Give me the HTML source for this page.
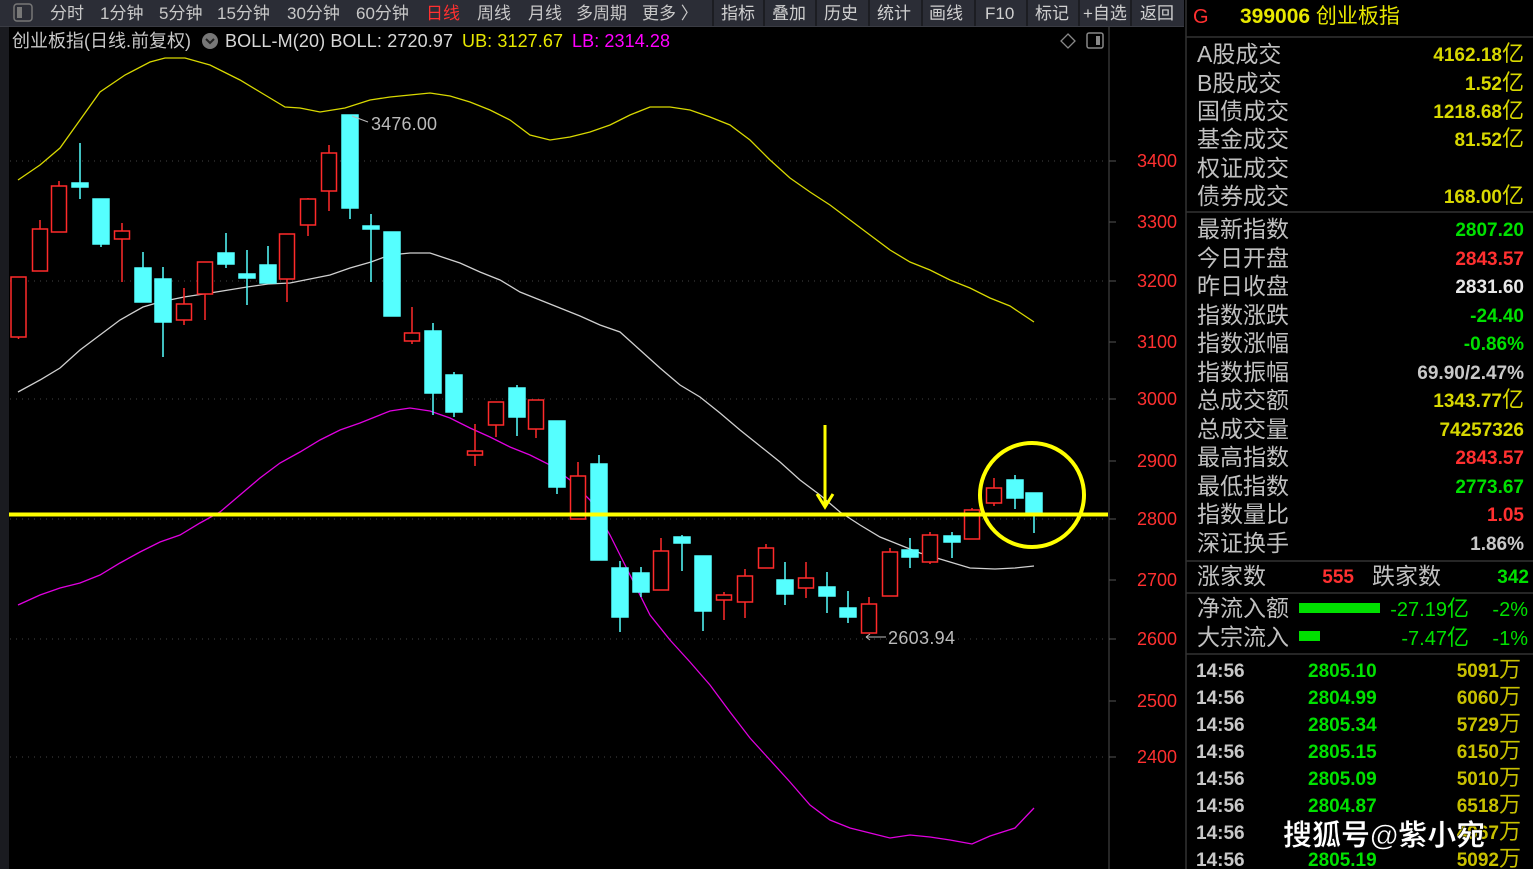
<!DOCTYPE html>
<html><head><meta charset="utf-8"><style>
html,body{margin:0;padding:0;background:#000;width:1533px;height:869px;overflow:hidden}
svg{display:block}
text{font-family:"Liberation Sans","Noto Sans CJK SC",sans-serif}
</style></head><body>
<svg width="1533" height="869" viewBox="0 0 1533 869" xmlns="http://www.w3.org/2000/svg">
<rect width="1533" height="869" fill="#000"/>
<rect x="0" y="0" width="1184" height="26" fill="#2b2d36"/>
<rect x="0" y="26" width="1184" height="1" fill="#3a3c44"/>
<rect x="14" y="4" width="18" height="17" rx="3" fill="none" stroke="#777" stroke-width="1.5"/>
<rect x="17" y="7" width="5" height="11" fill="#777"/>
<g fill="#c8c8c8" font-size="17">
<text x="50" y="19">分时</text><text x="100" y="19">1分钟</text><text x="159" y="19">5分钟</text>
<text x="217" y="19">15分钟</text><text x="287" y="19">30分钟</text><text x="356" y="19">60分钟</text>
<text x="426" y="19" fill="#ff3030">日线</text><text x="477" y="19">周线</text><text x="528" y="19">月线</text>
<text x="576" y="19">多周期</text><text x="642" y="19">更多 〉</text>
</g>
<g stroke="#1c1d22" stroke-width="2">
<line x1="713" y1="0" x2="713" y2="26"/><line x1="764" y1="0" x2="764" y2="26"/><line x1="816" y1="0" x2="816" y2="26"/>
<line x1="869" y1="0" x2="869" y2="26"/><line x1="922" y1="0" x2="922" y2="26"/><line x1="975" y1="0" x2="975" y2="26"/>
<line x1="1027" y1="0" x2="1027" y2="26"/><line x1="1079" y1="0" x2="1079" y2="26"/><line x1="1131" y1="0" x2="1131" y2="26"/>
</g>
<g fill="#d0d0d0" font-size="17">
<text x="721" y="19">指标</text><text x="772" y="19">叠加</text><text x="824" y="19">历史</text><text x="877" y="19">统计</text>
<text x="929" y="19">画线</text><text x="985" y="19">F10</text><text x="1035" y="19">标记</text><text x="1083" y="19">+自选</text><text x="1140" y="19">返回</text>
</g>
<rect x="0" y="27" width="9" height="842" fill="#1a1b20"/>
<g font-size="18">
<text x="12" y="47" fill="#c8c8c8">创业板指(日线.前复权)</text>
<circle cx="210" cy="41" r="8" fill="#777"/><path d="M206 39l4 4 4-4" stroke="#222" stroke-width="2" fill="none"/>
<text x="225" y="47" fill="#d8d8d8" textLength="228">BOLL-M(20)  BOLL: 2720.97</text>
<text x="462" y="47" fill="#e8e800" textLength="101">UB: 3127.67</text>
<text x="572" y="47" fill="#ff00ff" textLength="98">LB: 2314.28</text>
</g>
<path d="M1068 34l7 7-7 7-7-7z" fill="none" stroke="#888" stroke-width="1.3"/>
<rect x="1087" y="33" width="16" height="15" rx="2" fill="none" stroke="#888" stroke-width="1.5"/><rect x="1096" y="36" width="4" height="9" fill="#888"/>
<line x1="1109" y1="27" x2="1109" y2="869" stroke="#333" stroke-width="1.5"/>
<line x1="1186" y1="0" x2="1186" y2="869" stroke="#333" stroke-width="1.5"/>
<g stroke="#444" stroke-dasharray="1 5">
<line x1="10" y1="161" x2="1108" y2="161"/><line x1="10" y1="281" x2="1108" y2="281"/><line x1="10" y1="399" x2="1108" y2="399"/>
<line x1="10" y1="519" x2="1108" y2="519"/><line x1="10" y1="639" x2="1108" y2="639"/><line x1="10" y1="757" x2="1108" y2="757"/>
</g>
<g stroke="#555"><line x1="1109" y1="161" x2="1116" y2="161"/><line x1="1109" y1="222" x2="1116" y2="222"/><line x1="1109" y1="281" x2="1116" y2="281"/><line x1="1109" y1="342" x2="1116" y2="342"/><line x1="1109" y1="399" x2="1116" y2="399"/><line x1="1109" y1="461" x2="1116" y2="461"/><line x1="1109" y1="519" x2="1116" y2="519"/><line x1="1109" y1="580" x2="1116" y2="580"/><line x1="1109" y1="639" x2="1116" y2="639"/><line x1="1109" y1="701" x2="1116" y2="701"/><line x1="1109" y1="757" x2="1116" y2="757"/></g>
<g fill="#ff3030" font-size="18" text-anchor="end">
<text x="1177" y="167">3400</text><text x="1177" y="228">3300</text><text x="1177" y="287">3200</text><text x="1177" y="348">3100</text>
<text x="1177" y="405">3000</text><text x="1177" y="467">2900</text><text x="1177" y="525">2800</text><text x="1177" y="586">2700</text>
<text x="1177" y="645">2600</text><text x="1177" y="707">2500</text><text x="1177" y="763">2400</text>
</g>
<polyline fill="none" stroke="#d8d800" stroke-width="1.3" points="18,180 40,165 60,148 80,120 100,92 125,75 150,62 165,58 185,58 210,65 240,80 265,95 285,107 300,108 320,112 345,108 370,100 390,97 410,95 430,93 450,96 470,102 490,110 510,120 530,135 550,140 570,137 590,132 610,125 630,115 650,107 670,107 690,110 710,117 730,125 750,140 770,160 790,178 810,192 830,205 850,220 870,235 890,250 910,262 930,270 950,280 970,288 990,298 1010,306 1034,322"/>
<polyline fill="none" stroke="#d0d0d0" stroke-width="1.3" points="18,392 40,380 60,368 80,350 100,335 120,320 143,307 160,302 184,297 210,293 247,287 268,284 290,283 310,279 330,275 350,268 371,262 390,255 410,253 430,253 445,258 460,263 480,272 500,280 520,292 540,300 560,308 580,316 600,325 620,332 640,350 660,368 680,385 700,397 720,413 740,430 760,446 780,462 800,480 820,495 840,512 860,525 880,537 900,545 920,553 950,562 970,568 995,569 1015,568 1034,566"/>
<polyline fill="none" stroke="#e000e0" stroke-width="1.3" points="18,605 40,595 60,588 80,583 100,575 120,563 140,552 160,542 180,535 200,523 220,512 240,495 260,478 280,463 300,452 320,440 340,430 360,423 380,415 390,411 410,408 430,411 450,418 470,428 490,437 510,447 530,455 550,465 570,480 590,500 610,535 630,575 650,615 670,640 690,662 710,685 730,712 750,738 770,760 790,782 810,805 830,820 850,828 870,833 890,838 910,835 930,837 950,840 972,844 990,836 1015,828 1034,808"/>
<g stroke="#ff2a2a" stroke-width="1.5" fill="#000">
<line x1="18.5" y1="277" x2="18.5" y2="339"/><rect x="11" y="277" width="15" height="60"/>
<line x1="40" y1="220" x2="40" y2="271"/><rect x="32.5" y="229" width="15" height="42"/>
<line x1="59" y1="181" x2="59" y2="232"/><rect x="51.5" y="186" width="15" height="46"/>
<line x1="122" y1="223" x2="122" y2="282"/><rect x="114.5" y="231" width="15" height="8"/>
<line x1="184" y1="288" x2="184" y2="325"/><rect x="176.5" y="304" width="15" height="16"/>
<line x1="205" y1="262" x2="205" y2="320"/><rect x="197.5" y="262" width="15" height="32"/>
<line x1="287" y1="234" x2="287" y2="302"/><rect x="279.5" y="234" width="15" height="45"/>
<line x1="308" y1="198" x2="308" y2="236"/><rect x="300.5" y="199" width="15" height="26"/>
<line x1="329" y1="145" x2="329" y2="211"/><rect x="321.5" y="153" width="15" height="38"/>
<line x1="412" y1="307" x2="412" y2="344"/><rect x="404.5" y="333" width="15" height="8"/>
<line x1="475" y1="424" x2="475" y2="466"/><rect x="467.5" y="451" width="15" height="4"/>
<line x1="496" y1="402" x2="496" y2="437"/><rect x="488.5" y="402" width="15" height="23"/>
<line x1="536" y1="400" x2="536" y2="438"/><rect x="528.5" y="400" width="15" height="29"/>
<line x1="578" y1="462" x2="578" y2="519"/><rect x="570.5" y="476" width="15" height="43"/>
<line x1="661" y1="538" x2="661" y2="590"/><rect x="653.5" y="551" width="15" height="39"/>
<line x1="724" y1="592" x2="724" y2="620"/><rect x="716.5" y="595" width="15" height="5"/>
<line x1="745" y1="569" x2="745" y2="618"/><rect x="737.5" y="576" width="15" height="26"/>
<line x1="766" y1="544" x2="766" y2="568"/><rect x="758.5" y="548" width="15" height="20"/>
<line x1="806" y1="562" x2="806" y2="598"/><rect x="798.5" y="578" width="15" height="10"/>
<line x1="869" y1="597" x2="869" y2="633"/><rect x="861.5" y="604" width="15" height="29"/>
<line x1="890" y1="548" x2="890" y2="596"/><rect x="882.5" y="552" width="15" height="44"/>
<line x1="930" y1="532" x2="930" y2="564"/><rect x="922.5" y="535" width="15" height="27"/>
<line x1="972" y1="508" x2="972" y2="539"/><rect x="964.5" y="510" width="15" height="29"/>
<line x1="994" y1="478" x2="994" y2="506"/><rect x="986.5" y="488" width="15" height="15"/>
</g>
<g stroke="#55ffff" stroke-width="1.5" fill="#55ffff">
<line x1="80" y1="143" x2="80" y2="199"/><rect x="72" y="183" width="16" height="4"/>
<line x1="101" y1="199" x2="101" y2="247"/><rect x="93" y="199" width="16" height="45"/>
<line x1="143" y1="252" x2="143" y2="302"/><rect x="135" y="268" width="16" height="34"/>
<line x1="163" y1="267" x2="163" y2="357"/><rect x="155" y="279" width="16" height="43"/>
<line x1="226" y1="233" x2="226" y2="268"/><rect x="218" y="253" width="16" height="11"/>
<line x1="247" y1="250" x2="247" y2="305"/><rect x="239" y="274" width="16" height="4"/>
<line x1="268" y1="246" x2="268" y2="283"/><rect x="260" y="265" width="16" height="18"/>
<line x1="350" y1="115" x2="350" y2="219"/><rect x="342" y="115" width="16" height="93"/>
<line x1="371" y1="214" x2="371" y2="282"/><rect x="363" y="226" width="16" height="3"/>
<rect x="384" y="232" width="16" height="84"/>
<line x1="433" y1="323" x2="433" y2="415"/><rect x="425" y="331" width="16" height="62"/>
<line x1="454" y1="372" x2="454" y2="417"/><rect x="446" y="375" width="16" height="37"/>
<line x1="517" y1="385" x2="517" y2="436"/><rect x="509" y="388" width="16" height="29"/>
<line x1="557" y1="421" x2="557" y2="494"/><rect x="549" y="421" width="16" height="66"/>
<line x1="599" y1="455" x2="599" y2="560"/><rect x="591" y="464" width="16" height="96"/>
<line x1="620" y1="561" x2="620" y2="632"/><rect x="612" y="568" width="16" height="49"/>
<line x1="641" y1="567" x2="641" y2="597"/><rect x="633" y="573" width="16" height="19"/>
<line x1="682" y1="535" x2="682" y2="571"/><rect x="674" y="537" width="16" height="6"/>
<line x1="703" y1="556" x2="703" y2="631"/><rect x="695" y="556" width="16" height="55"/>
<line x1="785" y1="562" x2="785" y2="605"/><rect x="777" y="580" width="16" height="14"/>
<line x1="827" y1="572" x2="827" y2="613"/><rect x="819" y="587" width="16" height="9"/>
<line x1="848" y1="591" x2="848" y2="623"/><rect x="840" y="608" width="16" height="9"/>
<line x1="910" y1="538" x2="910" y2="568"/><rect x="902" y="550" width="16" height="7"/>
<line x1="952" y1="532" x2="952" y2="558"/><rect x="944" y="536" width="16" height="6"/>
<line x1="1015" y1="475" x2="1015" y2="509"/><rect x="1007" y="480" width="16" height="18"/>
<line x1="1034" y1="493" x2="1034" y2="533"/><rect x="1026" y="493" width="16" height="20"/>
</g>
<g fill="#bbb" font-size="18"><text x="371" y="130" textLength="66">3476.00</text><text x="888" y="644" textLength="67">2603.94</text></g>
<path d="M352 116 l16 6" stroke="#bbb"/><path d="M866 637 h20 M866 637 l4 -3 M866 637 l4 3" stroke="#bbb" fill="none"/>
<line x1="9" y1="514.5" x2="1108" y2="514.5" stroke="#ffff00" stroke-width="4"/>
<line x1="825" y1="425" x2="825" y2="505" stroke="#ffff00" stroke-width="3"/>
<path d="M817 494 l8 13 l8 -13" stroke="#ffff00" stroke-width="3" fill="none"/>
<circle cx="1032" cy="495" r="52" fill="none" stroke="#ffff00" stroke-width="4"/>
<text x="1193" y="23" fill="#ff3030" font-size="20">G</text>
<text x="1240" y="23" fill="#e8e800" font-size="21" font-weight="bold">399006 <tspan font-weight="normal">创业板指</tspan></text>
<g stroke="#333" stroke-width="1.5">
<line x1="1186" y1="37" x2="1533" y2="37"/><line x1="1186" y1="212" x2="1533" y2="212"/><line x1="1186" y1="561" x2="1533" y2="561"/>
<line x1="1186" y1="593" x2="1533" y2="593"/><line x1="1186" y1="654" x2="1533" y2="654"/>
</g>
<g fill="#c0c0c0" font-size="23">
<text x="1197" y="62">A股成交</text><text x="1197" y="91">B股成交</text><text x="1197" y="119">国债成交</text><text x="1197" y="147">基金成交</text>
<text x="1197" y="176">权证成交</text><text x="1197" y="204">债券成交</text>
<text x="1197" y="237">最新指数</text><text x="1197" y="266">今日开盘</text><text x="1197" y="294">昨日收盘</text><text x="1197" y="323">指数涨跌</text>
<text x="1197" y="351">指数涨幅</text><text x="1197" y="380">指数振幅</text><text x="1197" y="408">总成交额</text><text x="1197" y="437">总成交量</text>
<text x="1197" y="465">最高指数</text><text x="1197" y="494">最低指数</text><text x="1197" y="522">指数量比</text><text x="1197" y="551">深证换手</text>
<text x="1197" y="584">涨家数</text><text x="1372" y="584">跌家数</text>
<text x="1197" y="616">净流入额</text><text x="1197" y="645">大宗流入</text>
</g>
<g font-size="19" font-weight="bold" text-anchor="end">
<g fill="#d8d800"><text x="1524" y="61">4162.18<tspan font-weight="normal" font-size="22">亿</tspan></text><text x="1524" y="90">1.52<tspan font-weight="normal" font-size="22">亿</tspan></text>
<text x="1524" y="118">1218.68<tspan font-weight="normal" font-size="22">亿</tspan></text><text x="1524" y="146">81.52<tspan font-weight="normal" font-size="22">亿</tspan></text>
<text x="1524" y="203">168.00<tspan font-weight="normal" font-size="22">亿</tspan></text>
<text x="1524" y="407">1343.77<tspan font-weight="normal" font-size="22">亿</tspan></text><text x="1524" y="436">74257326</text></g>
<text x="1524" y="236" fill="#00e000">2807.20</text><text x="1524" y="265" fill="#ff3030">2843.57</text><text x="1524" y="293" fill="#e8e8e8">2831.60</text>
<text x="1524" y="322" fill="#00e000">-24.40</text><text x="1524" y="350" fill="#00e000">-0.86%</text><text x="1524" y="379" fill="#c8c8c8">69.90/2.47%</text>
<text x="1524" y="464" fill="#ff3030">2843.57</text><text x="1524" y="493" fill="#00e000">2773.67</text><text x="1524" y="521" fill="#ff3030">1.05</text>
<text x="1524" y="550" fill="#c8c8c8">1.86%</text>
<text x="1354" y="583" fill="#ff3030">555</text><text x="1529" y="583" fill="#00e000">342</text>
</g>
<rect x="1299" y="603" width="81" height="10" fill="#00e000"/>
<rect x="1299" y="631" width="21" height="10" fill="#00e000"/>
<g font-size="20" fill="#00e000" text-anchor="end">
<text x="1469" y="616">-27.19<tspan font-size="22">亿</tspan></text><text x="1528" y="616">-2%</text>
<text x="1469" y="645">-7.47<tspan font-size="22">亿</tspan></text><text x="1528" y="645">-1%</text>
</g>
<g font-size="19" font-weight="bold">
<g fill="#c8c8c8"><text x="1196" y="677">14:56</text><text x="1196" y="704">14:56</text><text x="1196" y="731">14:56</text><text x="1196" y="758">14:56</text><text x="1196" y="785">14:56</text><text x="1196" y="812">14:56</text><text x="1196" y="839">14:56</text><text x="1196" y="866">14:56</text></g>
<g fill="#00e000"><text x="1308" y="677">2805.10</text><text x="1308" y="704">2804.99</text><text x="1308" y="731">2805.34</text><text x="1308" y="758">2805.15</text><text x="1308" y="785">2805.09</text><text x="1308" y="812">2804.87</text><text x="1308" y="866">2805.19</text></g>
<g fill="#c8c000" text-anchor="end"><text x="1521" y="677">5091<tspan font-weight="normal" font-size="22">万</tspan></text><text x="1521" y="704">6060<tspan font-weight="normal" font-size="22">万</tspan></text><text x="1521" y="731">5729<tspan font-weight="normal" font-size="22">万</tspan></text><text x="1521" y="758">6150<tspan font-weight="normal" font-size="22">万</tspan></text><text x="1521" y="785">5010<tspan font-weight="normal" font-size="22">万</tspan></text><text x="1521" y="812">6518<tspan font-weight="normal" font-size="22">万</tspan></text><text x="1521" y="839">4967<tspan font-weight="normal" font-size="22">万</tspan></text><text x="1521" y="866">5092<tspan font-weight="normal" font-size="22">万</tspan></text></g>
</g>
<text x="1283" y="845" fill="#fff" font-size="29" font-weight="bold" stroke="#000" stroke-width="0.5">搜狐号@紫小宛</text>
</svg>
</body></html>
